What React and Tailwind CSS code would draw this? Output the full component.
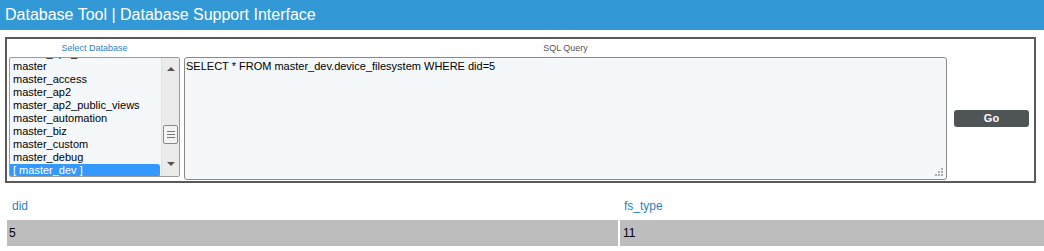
import React from "react";

const items = [
  "master_ap2_ext",
  "master",
  "master_access",
  "master_ap2",
  "master_ap2_public_views",
  "master_automation",
  "master_biz",
  "master_custom",
  "master_debug",
];

export default function App() {
  return (
    <div className="w-[1044px] h-[251px] bg-white overflow-hidden" style={{ fontFamily: '"Liberation Sans", Arial, sans-serif' }}>
      <div className="h-[30px] bg-[#3399d6] flex items-center pl-[5px]">
        <span className="text-white text-[16px] leading-none">Database Tool | Database Support Interface</span>
      </div>
      <div className="mt-[7px] mx-[5px] w-[1031px] h-[146px] border-2 border-[#5a5a5a] flex pl-[2px] pr-[5px]">
        <div className="w-[171px] flex flex-col">
          <div className="h-[18px] flex items-center justify-center text-[9px] text-[#2f7fc1] pt-[1px]">Select Database</div>
          <div className="h-[120px] border border-[#9a9a9a] rounded-[2px] bg-[#f5f8fa] flex overflow-hidden">
            <div className="flex-1 overflow-hidden">
              <div className="mt-[-11px] text-[11px] text-black">
                {items.map((it) => (
                  <div key={it} className="h-[13px] leading-[13px] pl-[3px]">{it}</div>
                ))}
                <div className="h-[13px] leading-[13px] pl-[3px] bg-[#3399ff] text-white rounded-r-[3px] mr-[1px]">[ master_dev ]</div>
              </div>
            </div>
            <div className="w-[18px] bg-[#ebebeb] border-l border-[#e0e0e0] relative">
              <svg className="absolute left-[5px] top-[8px]" width="8" height="5" viewBox="0 0 8 5">
                <path d="M0 5 L4 1 L8 5 Z" fill="#555" />
              </svg>
              <div className="absolute left-[1px] top-[67px] w-[15px] h-[19px] border border-[#888] bg-[#f4f4f4] rounded-[2px] flex flex-col items-center justify-center gap-[2px]">
                <div className="w-[8px] h-[1px] bg-[#777]" />
                <div className="w-[8px] h-[1px] bg-[#777]" />
                <div className="w-[8px] h-[1px] bg-[#777]" />
              </div>
              <svg className="absolute left-[5px] top-[104px]" width="8" height="5" viewBox="0 0 8 5">
                <path d="M0 0 L8 0 L4 4 Z" fill="#555" />
              </svg>
            </div>
          </div>
        </div>
        <div className="w-[763px] ml-[4px] flex flex-col">
          <div className="h-[18px] flex items-center justify-center text-[9px] text-[#555] pt-[1px]">SQL Query</div>
          <div className="h-[123px] border border-[#8a8a8a] rounded-[3px] bg-[#f5f8fa] relative px-[1px] pt-[2px]">
            <div className="text-[11px] leading-[13px] text-black">SELECT * FROM master_dev.device_filesystem WHERE did=5</div>
            <svg className="absolute right-[2px] bottom-[2px]" width="10" height="10" viewBox="0 0 10 10">
              <rect x="7" y="1" width="2" height="2" fill="#aaa" />
              <rect x="4" y="4" width="2" height="2" fill="#aaa" />
              <rect x="7" y="4" width="2" height="2" fill="#aaa" />
              <rect x="1" y="7" width="2" height="2" fill="#aaa" />
              <rect x="4" y="7" width="2" height="2" fill="#aaa" />
              <rect x="7" y="7" width="2" height="2" fill="#aaa" />
            </svg>
          </div>
        </div>
        <div className="flex-1 flex items-center justify-end pt-[16px]">
          <div className="w-[75px] h-[17px] bg-[#4f5557] rounded-[3px] text-white text-[11px] font-bold flex items-center justify-center">Go</div>
        </div>
      </div>
      <div className="mt-[10px] grid grid-cols-[613px_1fr] text-[12px]">
        <div className="h-[27px] pl-[12px] pb-[2px] flex items-center text-[#2f7fc1]">did</div>
        <div className="h-[27px] pl-[11px] pb-[2px] flex items-center text-[#2f7fc1]">fs_type</div>
      </div>
      <div className="ml-[7px] grid grid-cols-[611px_2px_1fr] h-[26px] text-[12px] text-black">
        <div className="bg-[#bdbdbd] pl-[2px] flex items-center">5</div>
        <div className="bg-white" />
        <div className="bg-[#bdbdbd] pl-[3px] flex items-center">11</div>
      </div>
    </div>
  );
}
